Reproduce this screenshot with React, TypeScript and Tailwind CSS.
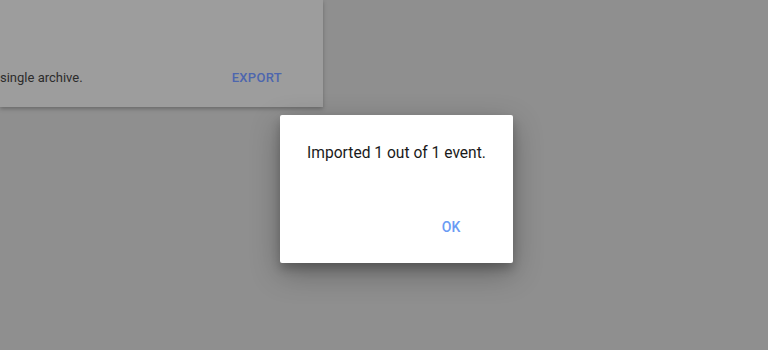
export default function App() {
  return (
    <div
      className="relative w-[768px] h-[350px] overflow-hidden bg-[#8f8f8f]"
      style={{ fontFamily: "Roboto, 'Liberation Sans', sans-serif" }}
    >
      <div className="w-[323px] h-[107px] bg-[#9d9d9d] shadow-[0_2px_4px_rgba(0,0,0,0.25)] flex flex-col justify-end">
        <div className="flex items-center justify-between h-[30px] mb-[14px] pr-[41px]">
          <span className="text-[13px] text-[#2c2c2c]">single archive.</span>
          <span className="text-[13px] font-medium text-[#4d66ae] tracking-[0.3px]">EXPORT</span>
        </div>
      </div>
      <div className="absolute left-[280px] top-[115px] w-[233px] h-[148px] bg-white rounded-[2px] shadow-[0_10px_30px_rgba(0,0,0,0.3),0_6px_10px_rgba(0,0,0,0.2)] flex flex-col">
        <div className="pt-[26px] px-[20px] text-center text-[15.6px] leading-[24px] text-[#1a1a1a]">
          Imported 1 out of 1 event.
        </div>
        <div className="flex-1" />
        <div className="flex justify-end pr-[18px] pb-[18px]">
          <button className="w-[88px] h-[36px] text-[14px] font-medium text-[#6a9bf4] text-center">
            OK
          </button>
        </div>
      </div>
    </div>
  );
}
